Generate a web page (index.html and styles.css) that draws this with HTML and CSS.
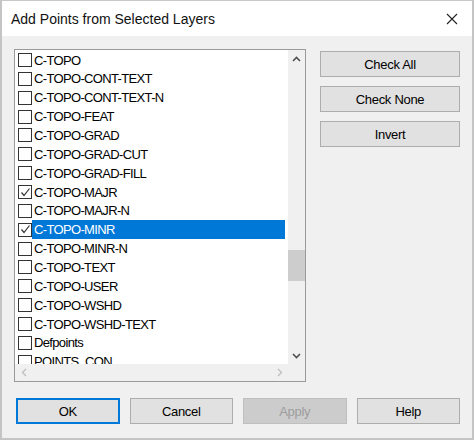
FILE: index.html
```html
<!DOCTYPE html>
<html>
<head>
<meta charset="utf-8">
<link rel="stylesheet" href="styles.css">
</head>
<body>
<div class="window">
  <div class="titlebar">
    <span class="title">Add Points from Selected Layers</span>
    <svg class="close" width="12" height="12" viewBox="0 0 12 12"><path d="M1 1 L11 11 M11 1 L1 11" stroke="#222" stroke-width="1.1" fill="none"/></svg>
  </div>
  <div class="content">
    <div class="main">
      <div class="list">
        <div class="rows">
          <div class="row"><span class="cb"></span><span class="lbl">C-TOPO</span></div>
          <div class="row"><span class="cb"></span><span class="lbl">C-TOPO-CONT-TEXT</span></div>
          <div class="row"><span class="cb"></span><span class="lbl">C-TOPO-CONT-TEXT-N</span></div>
          <div class="row"><span class="cb"></span><span class="lbl">C-TOPO-FEAT</span></div>
          <div class="row"><span class="cb"></span><span class="lbl">C-TOPO-GRAD</span></div>
          <div class="row"><span class="cb"></span><span class="lbl">C-TOPO-GRAD-CUT</span></div>
          <div class="row"><span class="cb"></span><span class="lbl">C-TOPO-GRAD-FILL</span></div>
          <div class="row"><span class="cb"><svg width="11" height="11" viewBox="0 0 11 11"><path d="M1.5 5.5 L4 8.5 L9.5 1.5" stroke="#333" stroke-width="1.2" fill="none"/></svg></span><span class="lbl">C-TOPO-MAJR</span></div>
          <div class="row"><span class="cb"></span><span class="lbl">C-TOPO-MAJR-N</span></div>
          <div class="row"><span class="cb"><svg width="11" height="11" viewBox="0 0 11 11"><path d="M1.5 5.5 L4 8.5 L9.5 1.5" stroke="#333" stroke-width="1.2" fill="none"/></svg></span><span class="lbl sel">C-TOPO-MINR</span></div>
          <div class="row"><span class="cb"></span><span class="lbl">C-TOPO-MINR-N</span></div>
          <div class="row"><span class="cb"></span><span class="lbl">C-TOPO-TEXT</span></div>
          <div class="row"><span class="cb"></span><span class="lbl">C-TOPO-USER</span></div>
          <div class="row"><span class="cb"></span><span class="lbl">C-TOPO-WSHD</span></div>
          <div class="row"><span class="cb"></span><span class="lbl">C-TOPO-WSHD-TEXT</span></div>
          <div class="row"><span class="cb"></span><span class="lbl">Defpoints</span></div>
          <div class="row"><span class="cb"></span><span class="lbl">POINTS_CON</span></div>
        </div>
        <div class="vscroll">
          <div class="arrow"><svg width="9" height="6" viewBox="0 0 9 6"><path d="M1 5 L4.5 1.5 L8 5" stroke="#505050" stroke-width="1.6" fill="none"/></svg></div>
          <div class="track"><div class="thumb"></div></div>
          <div class="arrow"><svg width="9" height="6" viewBox="0 0 9 6"><path d="M1 1 L4.5 4.5 L8 1" stroke="#505050" stroke-width="1.6" fill="none"/></svg></div>
        </div>
        <div class="hscroll">
          <div class="harrow"><svg width="6" height="9" viewBox="0 0 6 9"><path d="M5 1 L1.5 4.5 L5 8" stroke="#bfbfbf" stroke-width="1.4" fill="none"/></svg></div>
          <div class="harrow"><svg width="6" height="9" viewBox="0 0 6 9"><path d="M1 1 L4.5 4.5 L1 8" stroke="#bfbfbf" stroke-width="1.4" fill="none"/></svg></div>
        </div>
        <div class="corner"></div>
      </div>
      <div class="side">
        <button class="btn">Check All</button>
        <button class="btn">Check None</button>
        <button class="btn">Invert</button>
      </div>
    </div>
    <div class="footer">
      <button class="btn fbtn default">OK</button>
      <button class="btn fbtn">Cancel</button>
      <button class="btn fbtn disabled">Apply</button>
      <button class="btn fbtn">Help</button>
    </div>
  </div>
</div>
</body>
</html>
```

FILE: styles.css
```css
* { box-sizing: border-box; }
html, body { margin: 0; padding: 0; }
body {
  width: 474px;
  height: 440px;
  background: #f0f0f0;
  font-family: "Liberation Sans", Arial, sans-serif;
  color: #000;
}
.window {
  width: 474px;
  height: 440px;
  border-left: 2px solid #c4c4c4;
  border-right: 2px solid #c4c4c4;
  border-top: 1px solid #c8c8c8;
  border-bottom: 2px solid #c4c4c4;
  background: #f0f0f0;
  display: flex;
  flex-direction: column;
}
.titlebar {
  height: 35px;
  background: #ffffff;
  display: flex;
  align-items: center;
  justify-content: space-between;
  padding: 0 12px 0 9px;
  flex: none;
}
.title {
  font-size: 14px;
  color: #111;
}
.close { margin-right: 2px; }
.content {
  flex: 1;
  display: flex;
  flex-direction: column;
  padding: 13px 12px 14px 12px;
}
.main {
  display: flex;
  gap: 14px;
}
.list {
  width: 292px;
  height: 333px;
  border: 1px solid #9a9a9a;
  background: #fff;
  display: grid;
  grid-template-columns: 1fr 17px;
  grid-template-rows: 1fr 17px;
  overflow: hidden;
}
.rows {
  overflow: hidden;
  padding-top: 0.6px;
}
.row {
  height: 18.87px;
  display: flex;
  align-items: center;
  padding-left: 3px;
  font-size: 13px;
  letter-spacing: -0.65px;
  white-space: nowrap;
}
.cb {
  width: 14px;
  height: 14px;
  border: 1px solid #333;
  background: #fff;
  flex: none;
  display: flex;
  align-items: center;
  justify-content: center;
}
.lbl {
  padding: 0 2px 0 2px;
  height: 19px;
  line-height: 19px;
}
.lbl.sel {
  background: #0078d7;
  color: #fff;
  flex: 1;
  margin-right: 3px;
}
.vscroll {
  background: #f0f0f0;
  display: flex;
  flex-direction: column;
}
.arrow {
  height: 17px;
  display: flex;
  align-items: center;
  justify-content: center;
  flex: none;
}
.track { flex: 1; }
.thumb {
  margin-top: 183px;
  height: 31px;
  background: #cdcdcd;
}
.hscroll {
  background: #f0f0f0;
  display: flex;
  justify-content: space-between;
}
.harrow {
  width: 17px;
  display: flex;
  align-items: center;
  justify-content: center;
}
.corner { background: #f0f0f0; }
.side {
  display: flex;
  flex-direction: column;
  gap: 9px;
  padding-top: 2px;
}
.btn {
  width: 140px;
  height: 26px;
  background: #e1e1e1;
  border: 1px solid #adadad;
  font-family: "Liberation Sans", Arial, sans-serif;
  font-size: 13px;
  letter-spacing: -0.3px;
  color: #000;
  padding: 0;
  margin: 0;
}
.footer {
  display: flex;
  gap: 10px;
  margin-top: 16px;
  padding-left: 2px;
}
.fbtn { width: 104px; }
.default { border: 2px solid #0078d7; }
.disabled {
  background: #cccccc;
  border-color: #bfbfbf;
  color: #9d9d9d;
}
```
